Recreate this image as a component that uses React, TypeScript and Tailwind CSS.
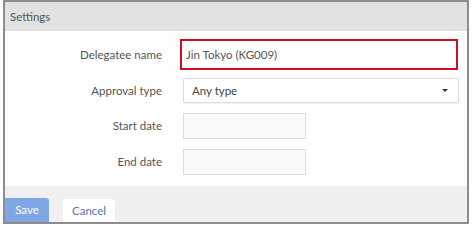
export default function App() {
  const labelCls = "w-[157px] text-right text-[11.5px] text-[#555]";
  return (
    <div className="w-[474px] h-[227px] bg-white font-['Lato','Liberation_Sans',sans-serif]">
      <div className="ml-[3px] w-[466px] h-[224px] border-2 border-[#8d8d8d] flex flex-col overflow-hidden">
        {/* Header */}
        <div className="h-[29px] bg-[#e2e2e2] flex items-center px-[5px] text-[11.5px] text-[#555]">
          Settings
        </div>

        {/* Form */}
        <div className="flex-1 flex flex-col pt-[8px]">
          <div className="flex items-center h-[31px]">
            <span className={labelCls}>Delegatee name</span>
            <div className="ml-[18px] w-[278px] h-[31px] border-2 border-[#d0101c] flex items-center px-[4px] text-[11.5px] text-[#555]">
              Jin Tokyo (KG009)
            </div>
          </div>
          <div className="flex items-center h-[25px] mt-[8px]">
            <span className={labelCls}>Approval type</span>
            <div className="ml-[21px] w-[276px] h-[25px] border border-[#dcdcdc] rounded-[2px] shadow-[0_1px_1px_rgba(0,0,0,0.06)] flex items-center justify-between pl-[8px] pr-[10px] text-[11.5px] text-[#444]">
              <span>Any type</span>
              <svg width="6" height="3" viewBox="0 0 6 3">
                <path d="M0 0h6L3 3z" fill="#333" />
              </svg>
            </div>
          </div>
          <div className="flex items-center h-[26px] mt-[10px]">
            <span className={labelCls}>Start date</span>
            <div className="ml-[21px] w-[123px] h-[26px] border border-[#dcdcdc] bg-[#f9f9f9]" />
          </div>
          <div className="flex items-center h-[26px] mt-[10px]">
            <span className={labelCls}>End date</span>
            <div className="ml-[21px] w-[123px] h-[26px] border border-[#dcdcdc] bg-[#f9f9f9]" />
          </div>
        </div>

        {/* Footer */}
        <div className="h-[36px] bg-[#f0f0f0] flex items-end gap-[14px]">
          <button className="w-[44px] h-[24px] bg-[#7ea7e3] rounded-tr-[3px] text-[11.5px] text-white">
            Save
          </button>
          <button className="w-[52px] h-[23px] bg-white rounded-t-[3px] text-[11.5px] text-[#5273a8]">
            Cancel
          </button>
        </div>
      </div>
    </div>
  );
}
